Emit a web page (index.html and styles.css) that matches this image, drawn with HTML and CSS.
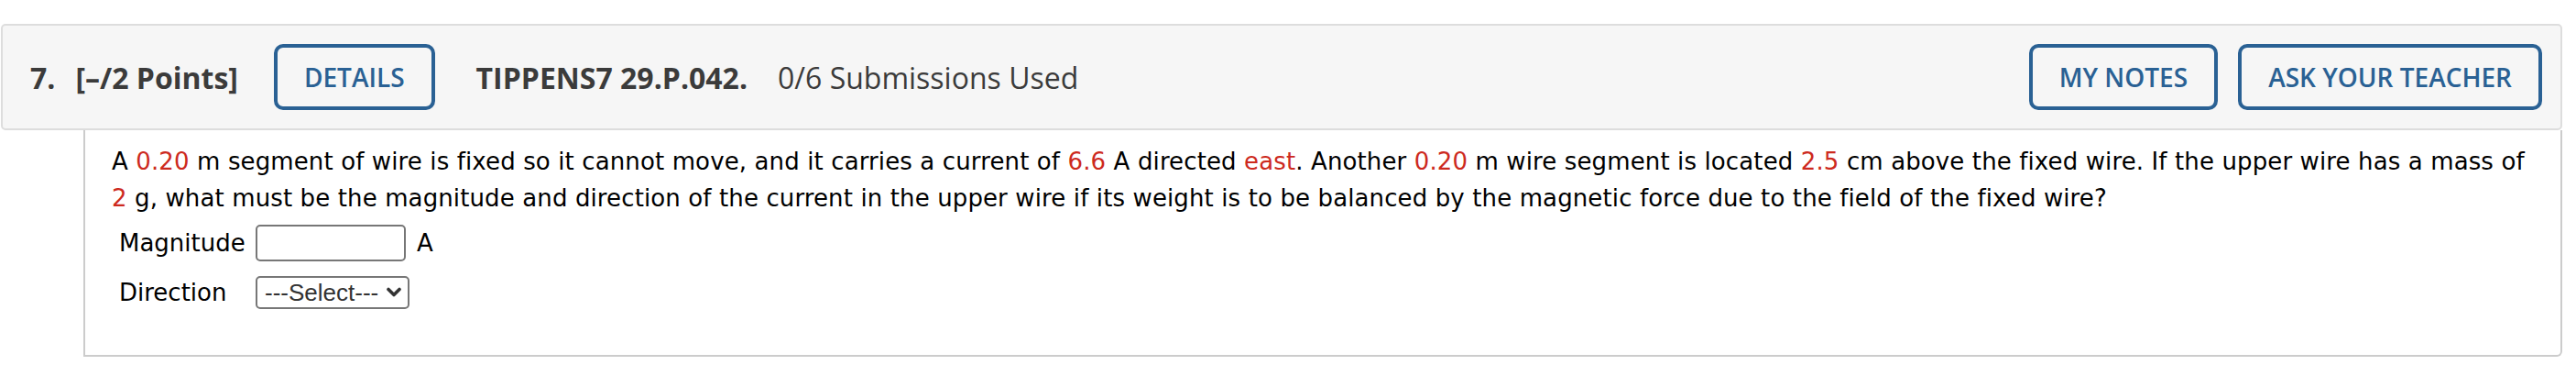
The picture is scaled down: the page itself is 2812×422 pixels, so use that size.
FILE: index.html
```html
<!DOCTYPE html>
<html lang="en">
<head>
    <meta charset="UTF-8">
    <title>Question 7</title>
    <link rel="stylesheet" href="styles.css">
</head>
<body>
    <div class="question">
        <div class="question-head">
            <span class="q-number">7.</span>
            <span class="q-points">[&ndash;/2 Points]</span>
            <button class="head-btn details-btn">Details</button>
            <span class="q-code">TIPPENS7 29.P.042.</span>
            <span class="q-subs">0/6 Submissions Used</span>
            <div class="head-right">
                <button class="head-btn">My Notes</button>
                <button class="head-btn">Ask Your Teacher</button>
            </div>
        </div>
        <div class="question-body">
            <p class="problem">A <span class="val">0.20</span> m segment of wire is fixed so it cannot move, and it carries a current of <span class="val">6.6</span> A directed <span class="val">east</span>. Another <span class="val">0.20</span> m wire segment is located <span class="val">2.5</span> cm above the fixed wire. If the upper wire has a mass of <span class="val">2</span> g, what must be the magnitude and direction of the current in the upper wire if its weight is to be balanced by the magnetic force due to the field of the fixed wire?</p>
            <div class="answers">
                <label class="ans-label" for="magnitude">Magnitude</label>
                <div class="ans-field">
                    <input type="text" id="magnitude" class="ans-input">
                    <span class="unit">A</span>
                </div>
                <label class="ans-label" for="direction">Direction</label>
                <div class="ans-field">
                    <span class="select-wrap">
                        <select id="direction" class="ans-select">
                            <option>---Select---</option>
                            <option>upward</option>
                            <option>downward</option>
                            <option>east</option>
                            <option>west</option>
                        </select>
                        <svg class="chevron" width="16" height="12" viewBox="0 0 16 12">
                            <path d="M2 2.5 L8 8.5 L14 2.5" fill="none" stroke="#333" stroke-width="3.6" stroke-linecap="round" stroke-linejoin="round"/>
                        </svg>
                    </span>
                </div>
            </div>
        </div>
    </div>
</body>
</html>
```

FILE: styles.css
```css
body {
    background-color: #ffffff;
    margin: 0;
    padding: 0;
}
.question {
    margin: 26px 15px 0 1px;
}
.question-head {
    background-color: #f6f6f6;
    border: 2px solid #dddddd;
    border-radius: 5px;
    padding: 20px 20px 20px 30px;
    display: flex;
    align-items: center;
    font-family: "Open Sans", sans-serif;
    font-size: 32px;
    color: #3b3b3b;
}
.q-number {
    font-weight: bold;
    margin-right: 22px;
}
.q-points {
    font-weight: bold;
    margin-right: 39px;
}
.q-code {
    font-weight: bold;
    margin-left: 45px;
    margin-right: 33px;
}
.head-btn {
    background-color: transparent;
    border: 4px solid #2a6194;
    border-radius: 10px;
    color: #2a6194;
    font-family: "Open Sans", sans-serif;
    font-size: 28px;
    font-weight: 600;
    text-transform: uppercase;
    height: 72px;
    padding: 0 29px;
    cursor: pointer;
}
.head-right {
    margin-left: auto;
    display: flex;
    gap: 22px;
}
.question-body {
    margin-left: 90px;
    border: 2px solid #cccccc;
    border-top: none;
    border-radius: 0 0 6px 0;
    padding: 14px 22px 50px 29px;
    font-family: "DejaVu Sans", Verdana, sans-serif;
    color: #000000;
}
.problem {
    margin: 0;
    font-size: 26px;
    line-height: 40px;
    letter-spacing: 0.12px;
}
.val {
    color: #cd2a1e;
}
.answers {
    display: grid;
    grid-template-columns: 137px max-content;
    column-gap: 12px;
    row-gap: 16px;
    align-items: center;
    margin: 9px 0 0 8px;
    font-size: 26px;
}
.ans-field {
    display: flex;
    align-items: center;
    gap: 12px;
}
.ans-input {
    width: 164px;
    height: 40px;
    box-sizing: border-box;
    border: 2px solid #777777;
    border-radius: 5px;
    background-color: #ffffff;
    font-size: 26px;
}
.select-wrap {
    position: relative;
    display: inline-block;
}
.ans-select {
    appearance: none;
    -webkit-appearance: none;
    width: 168px;
    height: 36px;
    box-sizing: border-box;
    border: 2px solid #777777;
    border-radius: 5px;
    background-color: #ffffff;
    padding: 0 0 0 8px;
    font-family: "Liberation Sans", Arial, sans-serif;
    font-size: 26px;
    color: #333333;
}
.chevron {
    position: absolute;
    right: 9px;
    top: 12px;
    pointer-events: none;
}
```
